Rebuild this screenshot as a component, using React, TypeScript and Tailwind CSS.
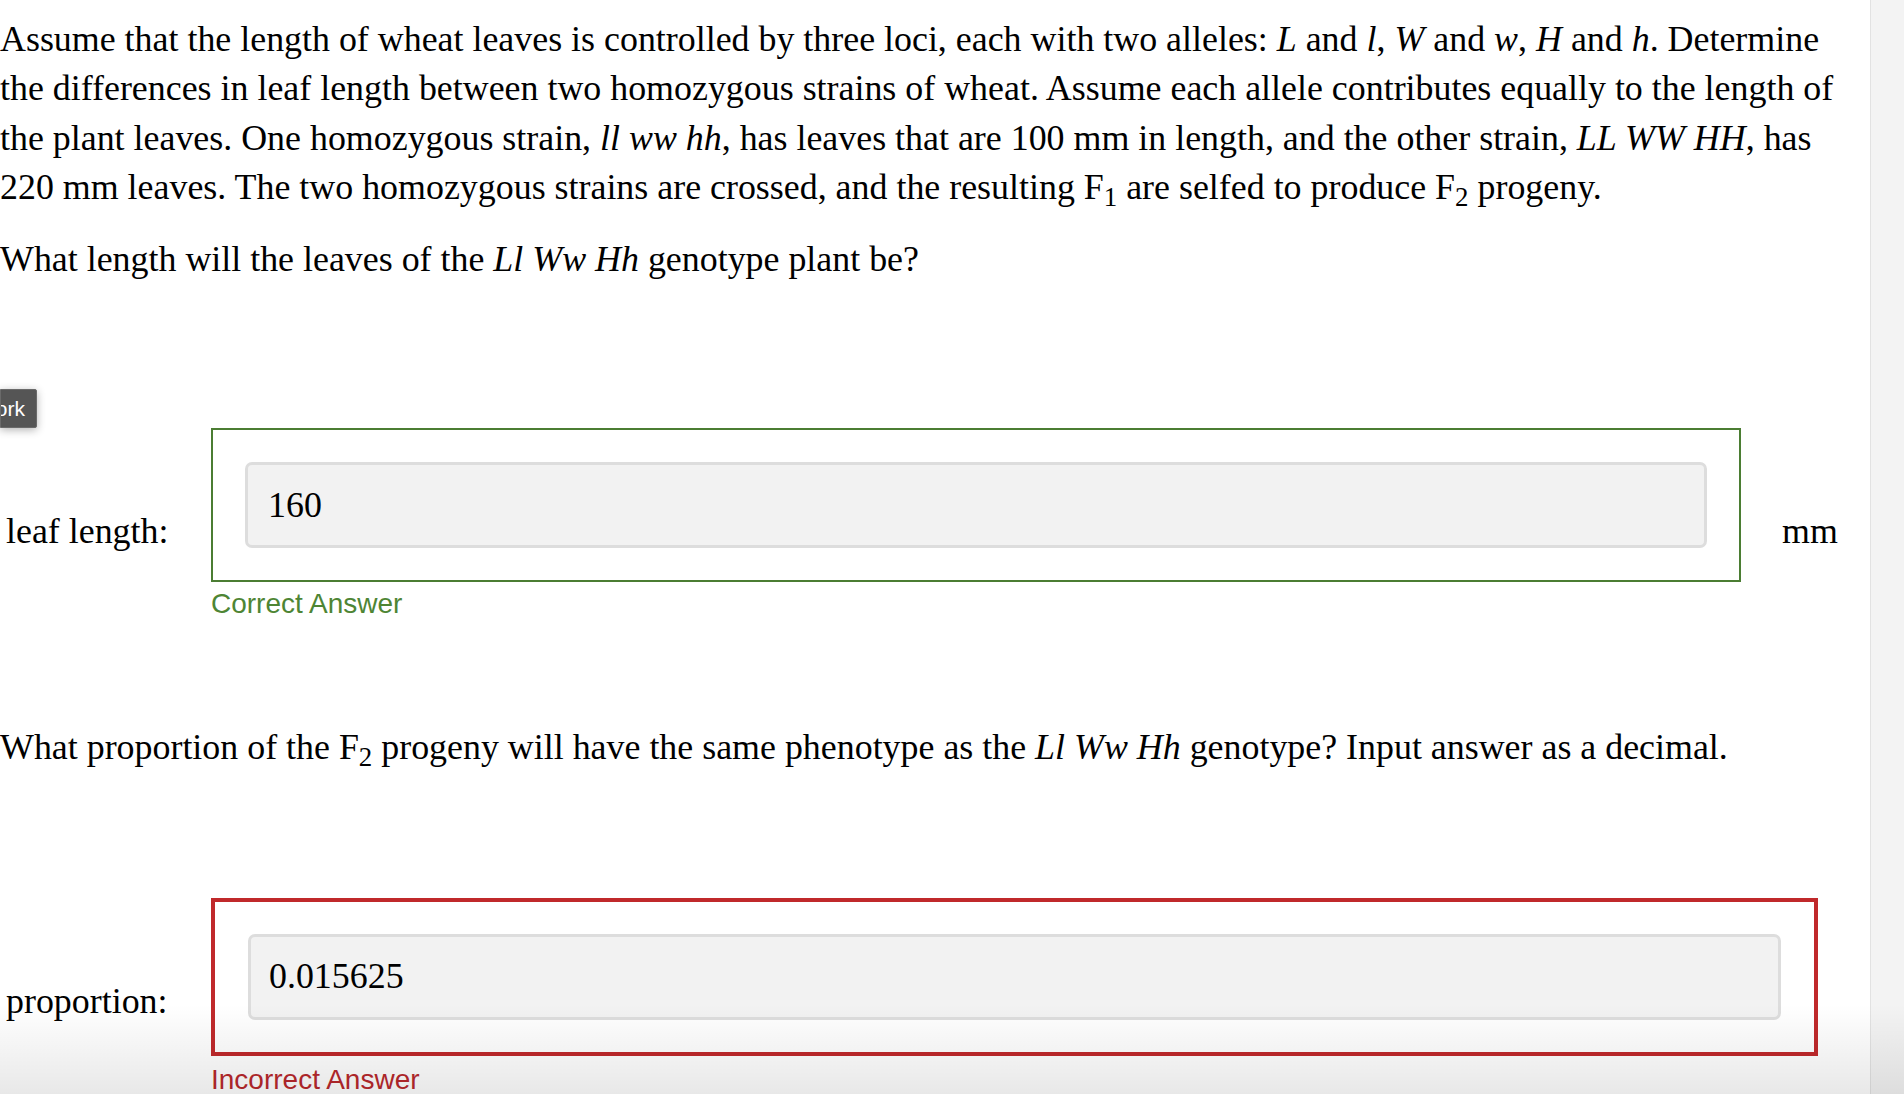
import React from "react";

const serif = "font-['Liberation_Serif','Times_New_Roman',serif]";
const sans = "font-['Liberation_Sans',Arial,sans-serif]";

interface AnswerRowProps {
	label: string;
	value: string;
	correct: boolean;
	unit?: string;
	labelPad: string;
}

const AnswerRow: React.FC<AnswerRowProps> = ({ label, value, correct, unit, labelPad }) => {
	return (
		<div className="flex flex-row items-center">
			<div className={"w-[211px] shrink-0 pl-[6px] " + labelPad}>{label}</div>
			<div className={"flex flex-col " + (correct ? "w-[1530px]" : "w-[1607px]")}>
				{correct ? (
					<div className="border-2 border-[#4b7d33] p-[32px]">
						<div className="flex h-[86px] items-center rounded-[7px] border-[3px] border-[#dddddd] bg-[#f2f2f2] px-[20px]">
							{value}
						</div>
					</div>
				) : (
					<div className="border-4 border-[#c0292b] px-[33px] py-[32px]">
						<div className="flex h-[86px] items-center rounded-[7px] border-[3px] border-[#dddddd] bg-[#f2f2f2] px-[18px]">
							{value}
						</div>
					</div>
				)}
				<div
					className={
						sans +
						" text-[28px] leading-[32px] " +
						(correct ? "mt-[6px] text-[#4e8534]" : "mt-[8px] text-[#b8282c]")
					}
				>
					{correct ? "Correct Answer" : "Incorrect Answer"}
				</div>
			</div>
			{unit && <div className={"ml-[41px] " + labelPad}>{unit}</div>}
		</div>
	);
};

export default function App() {
	return (
		<div className={"relative flex h-[1094px] w-[1904px] flex-row overflow-hidden bg-white text-black " + serif}>
			<div className="w-[1870px] shrink-0 text-[35.9px] leading-[49.3px]">
				<div className="w-[1850px] pt-[15px]">
					<p>
						Assume that the length of wheat leaves is controlled by three loci, each with two
						alleles: <i>L</i> and <i>l</i>, <i>W</i> and <i>w</i>, <i>H</i> and <i>h</i>.
						Determine the differences in leaf length between two homozygous strains of wheat.
						Assume each allele contributes equally to the length of the plant leaves. One
						homozygous strain, <i>ll ww hh</i>, has leaves that are 100 mm in length, and the
						other strain, <i>LL WW HH</i>, has 220 mm leaves. The two homozygous strains are
						crossed, and the resulting F<sub>1</sub> are selfed to produce F<sub>2</sub> progeny.
					</p>
					<p className="mt-[23px]">
						What length will the leaves of the <i>Ll Ww Hh</i> genotype plant be?
					</p>
				</div>

				<div className="mt-[105px] flex h-[39px] w-[37px] items-center justify-end overflow-hidden rounded-r-[2px] border border-[#6a6a6a] bg-[#555555] pr-[11px] shadow-[0_2px_8px_rgba(0,0,0,0.3)]">
					<span className={sans + " whitespace-nowrap text-[21px] leading-none text-white"}>Work</span>
				</div>

				<AnswerRow label="leaf length:" value="160" correct={true} unit="mm" labelPad="pt-[14px]" />

				<p className="mt-[103px]">
					What proportion of the F<sub>2</sub> progeny will have the same phenotype as the{" "}
					<i>Ll Ww Hh</i> genotype? Input answer as a decimal.
				</p>

				<div className="mt-[125px]">
					<AnswerRow label="proportion:" value="0.015625" correct={false} labelPad="pt-[10px]" />
				</div>
			</div>

			<div className="h-full w-[34px] shrink-0 border-l border-[#e2e2e2] bg-[#f3f3f3]" />

			<div className="pointer-events-none absolute bottom-0 left-0 h-[90px] w-full bg-linear-to-b from-transparent to-black/[0.09]" />
		</div>
	);
}
